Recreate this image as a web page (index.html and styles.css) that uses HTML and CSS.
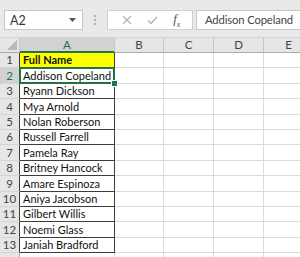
FILE: index.html
```html
<!DOCTYPE html>
<html lang="en">
<head>
    <meta charset="UTF-8">
    <title>Sheet1 - Excel</title>
    <link rel="stylesheet" href="styles.css">
</head>
<body>
    <div class="toolbar">
        <div class="namebox">
            <span>A2</span>
            <svg class="caret" width="7" height="4" viewBox="0 0 7 4"><polygon points="0,0 7,0 3.5,4" fill="#555"/></svg>
        </div>
        <div class="dots"><i></i><i></i><i></i></div>
        <div class="fx-buttons">
            <svg width="10" height="10" viewBox="0 0 10 10"><path d="M1 1 L9 9 M9 1 L1 9" stroke="#b3b3b3" stroke-width="1.2" fill="none"/></svg>
            <svg width="11" height="9" viewBox="0 0 11 9"><path d="M1 4.5 L4 7.5 L10 1" stroke="#b3b3b3" stroke-width="1.3" fill="none"/></svg>
            <span class="fx">f<sub>x</sub></span>
        </div>
        <div class="formula">Addison Copeland</div>
    </div>

    <div class="sheet" id="sheet">
        <div class="corner">
            <svg width="10" height="10" viewBox="0 0 10 10"><polygon points="10,0 10,10 0,10" fill="#b7b7b7"/></svg>
        </div>
        <div class="col-head active">A</div>
        <div class="col-head">B</div>
        <div class="col-head">C</div>
        <div class="col-head">D</div>
        <div class="col-head">E</div>
    </div>

    <script>
        const names = [
            'Full Name', 'Addison Copeland', 'Ryann Dickson', 'Mya Arnold',
            'Nolan Roberson', 'Russell Farrell', 'Pamela Ray', 'Britney Hancock',
            'Amare Espinoza', 'Aniya Jacobson', 'Gilbert Willis', 'Noemi Glass',
            'Janiah Bradford'
        ];
        const sheet = document.getElementById('sheet');

        // 13 filled rows, plus the top edge of row 14 at the bottom of the window
        for (let r = 1; r <= 14; r++) {
            const head = document.createElement('div');
            head.className = 'row-head';
            if (r <= 13) {
                head.classList.add('boxed');
                head.textContent = r;
            }
            if (r === 2) head.classList.add('active');
            sheet.appendChild(head);

            for (let c = 0; c < 5; c++) {
                const cell = document.createElement('div');
                cell.className = 'cell';
                if (c === 0 && r <= 13) {
                    cell.classList.add('boxed');
                    cell.textContent = names[r - 1];
                    if (r === 1) cell.classList.add('title');
                    if (r === 2) cell.classList.add('selected');
                }
                sheet.appendChild(cell);
            }
        }
    </script>
</body>
</html>
```

FILE: styles.css
```css
body {
    margin: 0;
    width: 300px;
    height: 257px;
    overflow: hidden;
    background-color: #fff;
    font-family: Lato, "Liberation Sans", sans-serif;
}

.toolbar {
    height: 38px;
    background-color: #e9e9e9;
    display: flex;
    align-items: flex-start;
    padding-top: 10px;
    box-sizing: border-box;
    border-bottom: 1px solid #d4d4d4;
}

.namebox {
    margin-left: 4px;
    width: 79px;
    height: 20px;
    box-sizing: border-box;
    background-color: #fff;
    border: 1px solid #c6c6c6;
    display: flex;
    align-items: center;
    justify-content: space-between;
    padding: 0 6px 0 5px;
    font-size: 12.5px;
    color: #333;
}

.dots {
    width: 24px;
    height: 20px;
    display: flex;
    flex-direction: column;
    align-items: center;
    justify-content: center;
    gap: 2px;
}

.dots i {
    width: 2px;
    height: 2px;
    background-color: #b0b0b0;
}

.fx-buttons {
    width: 86px;
    height: 20px;
    box-sizing: border-box;
    background-color: #fff;
    border: 1px solid #d0d0d0;
    display: flex;
    align-items: center;
    justify-content: space-around;
    padding: 0 4px 0 6px;
}

.fx {
    font-family: "Liberation Serif", serif;
    font-style: italic;
    font-size: 13px;
    color: #555;
}

.fx sub {
    font-size: 8px;
}

.formula {
    margin-left: 3px;
    flex: 1;
    height: 20px;
    box-sizing: border-box;
    background-color: #fff;
    border: 1px solid #c6c6c6;
    border-right: none;
    padding-left: 8px;
    font-size: 11.2px;
    letter-spacing: -0.1px;
    line-height: 18px;
    color: #444;
    white-space: nowrap;
}

.sheet {
    display: grid;
    grid-template-columns: 20px 95px 49px 50px 50px 50px;
    grid-template-rows: 15px repeat(14, 15.4px);
    font-size: 11px;
}

.corner,
.col-head,
.row-head {
    background-color: #e6e6e6;
    color: #444;
    box-sizing: border-box;
}

.corner {
    border-right: 1px solid #c6c6c6;
    border-bottom: 1px solid #ababab;
    display: flex;
    align-items: flex-end;
    justify-content: flex-end;
    padding: 0 2px 2px 0;
}

.col-head {
    border-right: 1px solid #c6c6c6;
    border-bottom: 1px solid #ababab;
    text-align: center;
    line-height: 14px;
    font-size: 11.5px;
}

.col-head.active {
    background-color: #d2d2d2;
    color: #217346;
    border-bottom: 2px solid #217346;
}

.row-head {
    border-right: 1px solid #ababab;
    border-bottom: 1px solid #d4d4d4;
    text-align: center;
    display: flex;
    align-items: flex-end;
    justify-content: center;
    padding-bottom: 1px;
    font-size: 11.5px;
}

.row-head.boxed {
    border-right-color: #3c3c3c;
}

.row-head.active {
    background-color: #d2d2d2;
    color: #217346;
}

.cell {
    position: relative;
    box-sizing: border-box;
    border-right: 1px solid #dadada;
    border-bottom: 1px solid #dadada;
    padding: 0 0 1px 3px;
    display: flex;
    align-items: flex-end;
    white-space: nowrap;
    color: #111;
}

.cell.boxed {
    border-right-color: #3c3c3c;
    border-bottom-color: #3c3c3c;
}

.cell.title {
    background-color: #ffff00;
    font-weight: bold;
}

.cell.selected::after {
    content: "";
    position: absolute;
    top: -1px;
    left: -1px;
    right: -1px;
    bottom: -1px;
    border: 2px solid #217346;
}

.cell.selected::before {
    content: "";
    position: absolute;
    right: -4px;
    bottom: -4px;
    width: 5px;
    height: 5px;
    background-color: #217346;
    border: 1px solid #fff;
    z-index: 1;
}
```
